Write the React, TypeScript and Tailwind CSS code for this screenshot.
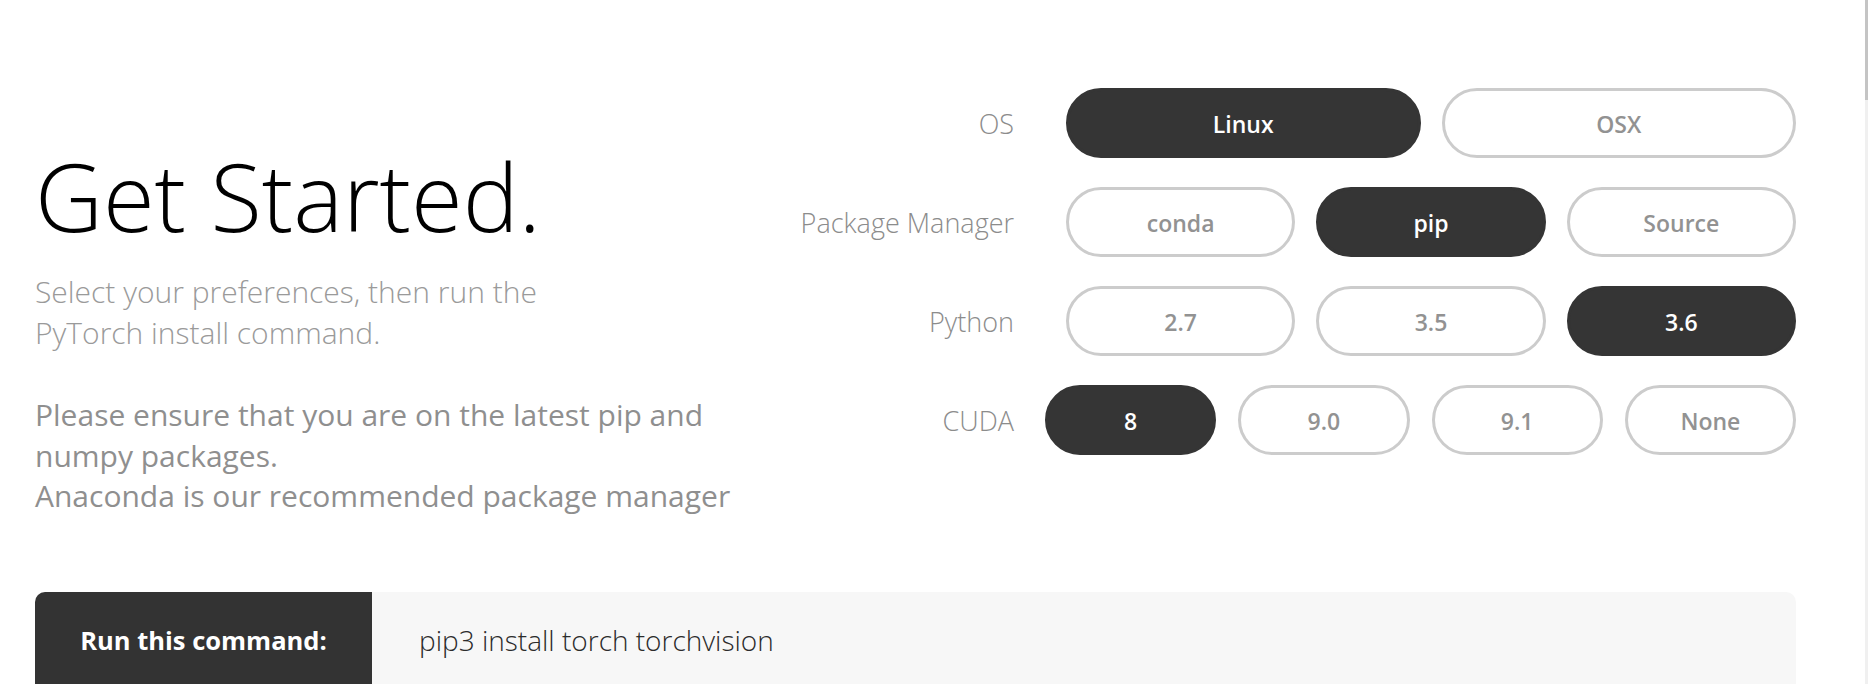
import React, { useState } from 'react';

type Row = {
  label: string;
  options: string[];
  compact?: boolean;
};

const rows: Row[] = [
  { label: 'OS', options: ['Linux', 'OSX'] },
  { label: 'Package Manager', options: ['conda', 'pip', 'Source'] },
  { label: 'Python', options: ['2.7', '3.5', '3.6'] },
  { label: 'CUDA', options: ['8', '9.0', '9.1', 'None'], compact: true },
];

const App: React.FC = () => {
  const [selected, setSelected] = useState<Record<string, string>>({
    OS: 'Linux',
    'Package Manager': 'pip',
    Python: '3.6',
    CUDA: '8',
  });

  const pick = (label: string, value: string) => {
    setSelected((prev) => ({ ...prev, [label]: value }));
  };

  return (
    <div className="flex h-[684px] w-full overflow-hidden bg-white font-['Open_Sans',sans-serif]">
      <div className="flex-1 pl-[35px] pr-[69px]">
        <div className="flex h-[592px]">
          {/* Intro */}
          <div className="w-[745px] shrink-0 pt-[149px]">
            <h1 className="text-[94px] leading-[94px] font-light text-black whitespace-nowrap">Get Started.</h1>
            <p className="mt-[28px] text-[30px] leading-[41px] font-light text-[#9a9a9a] whitespace-nowrap">
              Select your preferences, then run the
              <br />
              PyTorch install command.
            </p>
            <p className="mt-[42px] text-[30px] leading-[40.5px] text-[#8f8f8f] whitespace-nowrap">
              Please ensure that you are on the latest pip and
              <br />
              numpy packages.
              <br />
              Anaconda is our recommended package manager
            </p>
          </div>

          {/* Selector */}
          <div className="flex flex-1 flex-col gap-[29px] pt-[88px]">
            {rows.map((row) => (
              <div key={row.label} className="flex h-[70px] items-center">
                <div className="w-[234px] shrink-0 pt-[2px] text-right text-[27px] font-light text-[#8c8c8c] whitespace-nowrap">
                  {row.label}
                </div>
                <div className={row.compact ? 'ml-[31px] flex h-full flex-1 gap-[22px]' : 'ml-[52px] flex h-full flex-1 gap-[21px]'}>
                  {row.options.map((opt) => {
                    const active = selected[row.label] === opt;
                    return (
                      <button
                        key={opt}
                        onClick={() => pick(row.label, opt)}
                        className={
                          active
                            ? 'flex h-full flex-1 items-center justify-center rounded-full border-[3px] border-[#353535] bg-[#353535] pt-[3px] text-[23px] font-semibold text-white'
                            : 'flex h-full flex-1 items-center justify-center rounded-full border-[3px] border-[#cccccc] bg-white pt-[3px] text-[23px] font-semibold text-[#929292]'
                        }
                      >
                        {opt}
                      </button>
                    );
                  })}
                </div>
              </div>
            ))}
          </div>
        </div>

        {/* Command */}
        <div className="flex h-[96px] overflow-hidden rounded-t-[10px]">
          <div className="flex w-[337px] shrink-0 items-center justify-center bg-[#333333] text-[25.5px] font-bold text-white">
            Run this command:
          </div>
          <div className="flex flex-1 items-center bg-[#f7f7f7] pl-[47px] text-[28px] font-light text-[#2b2b2b]">
            pip3 install torch torchvision
          </div>
        </div>
      </div>

      {/* scrollbar */}
      <div className="flex h-full w-[3px] shrink-0 flex-col bg-[#f0f0f0]">
        <div className="h-[100px] bg-[#c4c4c4]" />
      </div>
    </div>
  );
};

export default App;
